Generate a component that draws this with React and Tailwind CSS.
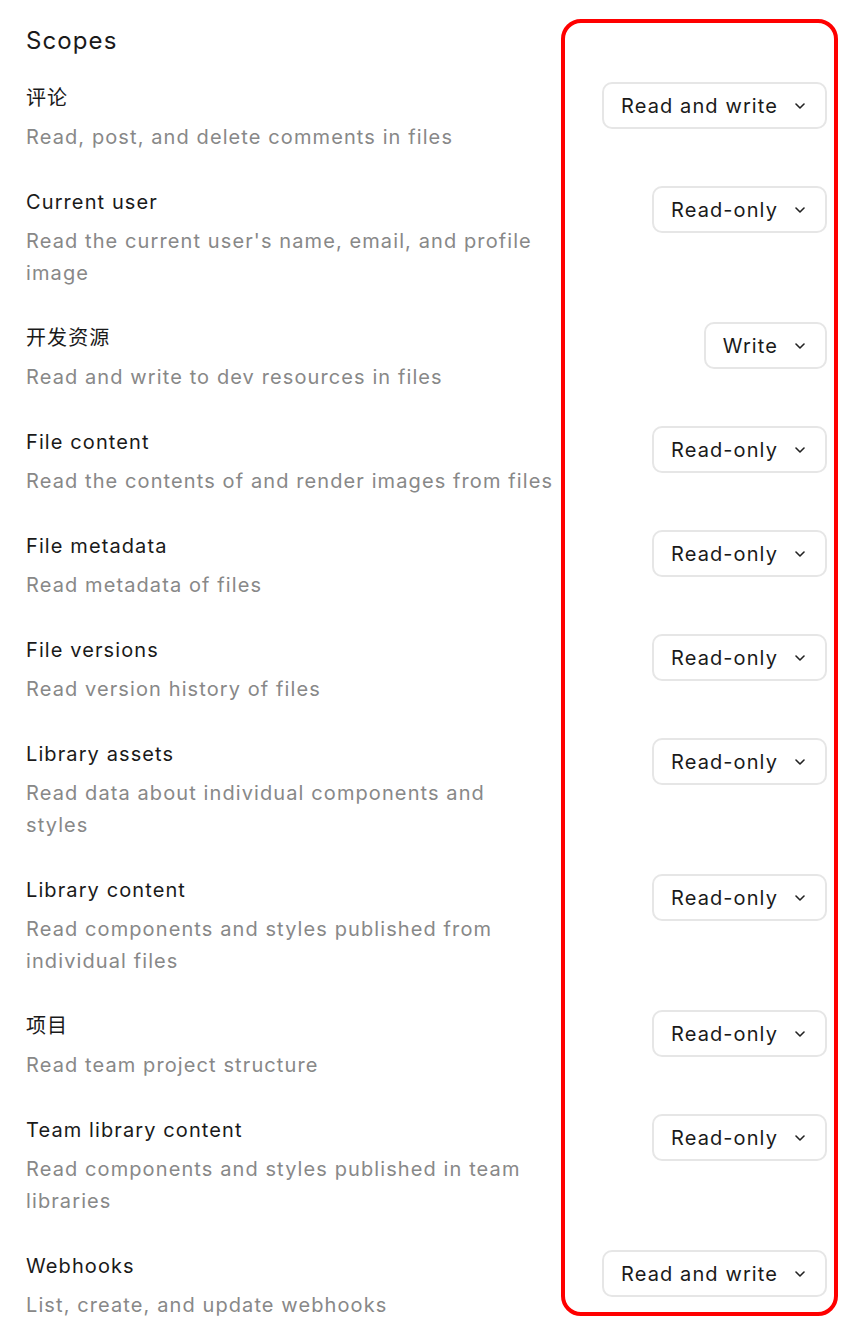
import React from "react";

const rows = [
  { label: "评论", desc: ["Read, post, and delete comments in files"], value: "Read and write" },
  { label: "Current user", desc: ["Read the current user's name, email, and profile", "image"], value: "Read-only" },
  { label: "开发资源", desc: ["Read and write to dev resources in files"], value: "Write" },
  { label: "File content", desc: ["Read the contents of and render images from files"], value: "Read-only" },
  { label: "File metadata", desc: ["Read metadata of files"], value: "Read-only" },
  { label: "File versions", desc: ["Read version history of files"], value: "Read-only" },
  { label: "Library assets", desc: ["Read data about individual components and", "styles"], value: "Read-only" },
  { label: "Library content", desc: ["Read components and styles published from", "individual files"], value: "Read-only" },
  { label: "项目", desc: ["Read team project structure"], value: "Read-only" },
  { label: "Team library content", desc: ["Read components and styles published in team", "libraries"], value: "Read-only" },
  { label: "Webhooks", desc: ["List, create, and update webhooks"], value: "Read and write" },
];

function Chevron() {
  return (
    <svg width="10" height="6" viewBox="0 0 10 6" fill="none" className="shrink-0">
      <path d="M1 1l4 4 4-4" stroke="#222" strokeWidth="1.6" strokeLinecap="round" strokeLinejoin="round" />
    </svg>
  );
}

export default function App() {
  return (
    <div
      className="relative w-[858px] h-[1344px] bg-white text-[#1a1a1a] tracking-[1.1px]"
      style={{ fontFamily: 'Inter, "Noto Sans CJK SC", sans-serif' }}
    >
      <div className="pl-[26px] pr-[31px] pt-[25px]">
        <h2 className="text-[24px] leading-[32px] font-normal text-[#1a1a1a]">Scopes</h2>
        <div className="mt-[25px] flex flex-col">
          {rows.map((r, i) => (
            <div key={i} className="flex justify-between items-start pb-[33px]">
              <div className="flex flex-col">
                <div className="text-[20px] leading-[32px] text-[#1a1a1a]">{r.label}</div>
                <div className="mt-[7px] text-[20px] leading-[32px] text-[#888888] whitespace-nowrap">
                  {r.desc.map((d, j) => (
                    <div key={j}>{d}</div>
                  ))}
                </div>
              </div>
              <div className="h-[47px] flex items-center gap-[17px] pl-[17px] pr-[20px] border-2 border-[#e6e6e6] rounded-[10px] text-[20px] text-[#1a1a1a] bg-white">
                <span>{r.value}</span>
                <Chevron />
              </div>
            </div>
          ))}
        </div>
      </div>
      <div className="absolute left-[561px] top-[19px] w-[277px] h-[1297px] border-4 border-[#ff0000] rounded-[20px] pointer-events-none" />
    </div>
  );
}
